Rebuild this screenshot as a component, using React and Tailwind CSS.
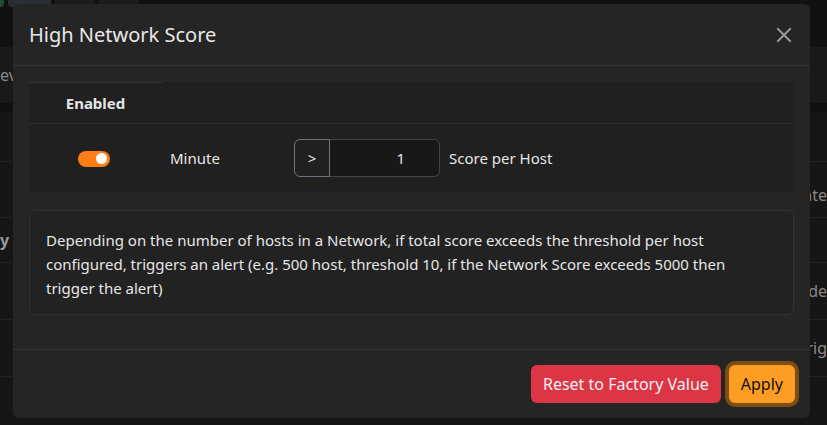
import React from 'react';

const font = { fontFamily: '"Noto Sans", "Open Sans", sans-serif' };

const App = () => {
    return (
        <div className="relative w-[827px] h-[425px] overflow-hidden bg-[#111111] text-[#e6e6e6]" style={font}>
            {/* dimmed page behind the modal */}
            <div className="flex flex-col h-full">
                <div className="flex gap-1 h-[7px]">
                    <div className="w-[4px] bg-[#1d4d33] rounded-br" />
                    <div className="w-[43px] bg-[#2b2f33] rounded-b" />
                    <div className="w-[40px] bg-[#1c1c1c] rounded-b" />
                    <div className="w-[40px] bg-[#1c1c1c] rounded-b" />
                </div>
                <div className="h-[40px]" />
                <div className="h-[56px] bg-[#191919] flex items-center text-[16px] text-[#8a8a8a]">ev</div>
                <div className="h-[9px]" />
                <div className="flex-1 flex flex-col bg-[#161616] text-[16px]">
                    <div className="h-[50px] border-b border-[#222]" />
                    <div className="h-[56px] border-b border-[#222] flex justify-end items-center pt-[10px] text-[#8a8a8a]">nte</div>
                    <div className="h-[45px] border-b border-[#222] flex items-center font-bold text-[#9a9a9a]">y</div>
                    <div className="h-[57px] border-b border-[#222] flex justify-end items-center text-[#8a8a8a]">de</div>
                    <div className="h-[57px] border-b border-[#222] flex justify-end items-center text-[#8a8a8a]">rig</div>
                </div>
            </div>

            {/* modal */}
            <div className="absolute left-[13px] top-[4px] w-[797px] h-[414px] bg-[#252525] rounded-md flex flex-col">
                <div className="h-[62px] flex items-center justify-between px-4 border-b border-[#333]">
                    <h1 className="text-[20px] text-[#e8e8e8]">High Network Score</h1>
                    <svg width="18" height="18" viewBox="0 0 16 16" className="mr-[1px]">
                        <path d="M2 2 L14 14 M14 2 L2 14" stroke="#9a9a9a" strokeWidth="1.6" />
                    </svg>
                </div>

                <div className="flex-1 px-4 pt-4">
                    <div className="bg-[#202020]">
                        <div className="flex h-[41px] items-center">
                            <div className="w-[133px] h-full flex items-center justify-center font-bold text-[15px] border-t border-[#333]">Enabled</div>
                        </div>
                        <div className="flex h-[69px] items-center border-t border-[#2e2e2e]">
                            <div className="w-[133px] flex justify-center pr-[3px] pt-[1px]">
                                <div className="w-[32px] h-[16px] rounded-full bg-[#fd7e14] flex items-center justify-end pr-[3px]">
                                    <div className="w-[11px] h-[11px] rounded-full bg-white" />
                                </div>
                            </div>
                            <div className="w-[132px] pl-2 text-[15px]">Minute</div>
                            <div className="flex items-center">
                                <div className="flex h-[38px]">
                                    <div className="w-[36px] flex items-center justify-center border border-[#6c757d] rounded-l-md text-[15px]">&gt;</div>
                                    <div className="w-[110px] flex items-center justify-end pr-[34px] bg-[#181818] border border-l-0 border-[#444] rounded-r-md text-[15px]">1</div>
                                </div>
                                <span className="ml-[9px] text-[15px]">Score per Host</span>
                            </div>
                        </div>
                    </div>

                    <div className="mt-[18px] h-[105px] border border-[#333] rounded-md bg-[#222] px-4 py-[17px] text-[15px] leading-6">
                        Depending on the number of hosts in a Network, if total score exceeds the threshold per host configured, triggers an alert (e.g. 500 host, threshold 10, if the Network Score exceeds 5000 then trigger the alert)
                    </div>
                </div>

                <div className="h-[69px] border-t border-[#333] flex items-center justify-end gap-[8px] pr-[15px]">
                    <button className="h-[38px] px-[12px] rounded-md bg-[#dc3545] text-[#f1f1f1] text-[16px]">Reset to Factory Value</button>
                    <button className="h-[38px] px-[12px] rounded-md bg-[#fd9d24] text-[#111] text-[16px] ring-4 ring-[#7d4d12]">Apply</button>
                </div>
            </div>
        </div>
    );
};

export default App;
